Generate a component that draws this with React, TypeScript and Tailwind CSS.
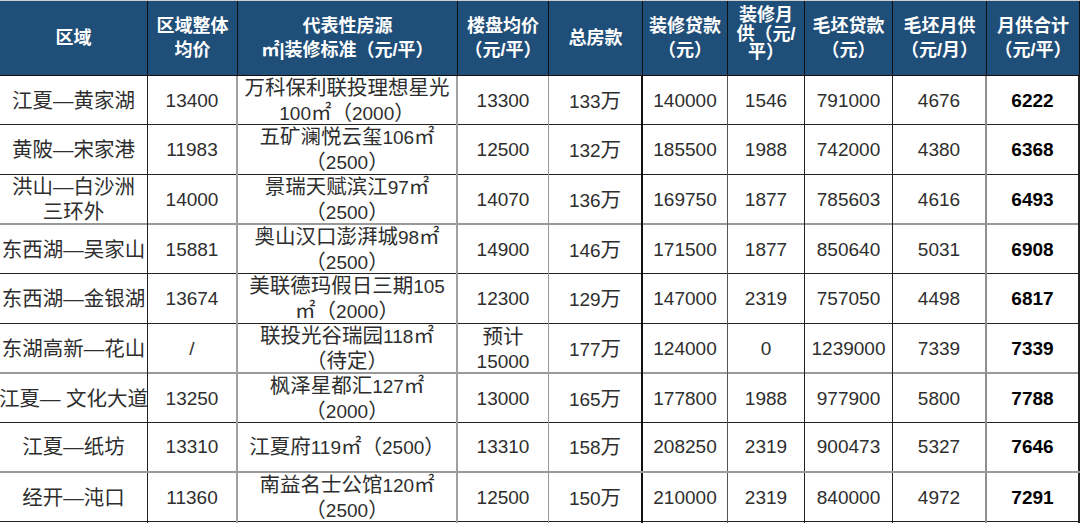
import React from "react";

// column widths in px, taken from the sheet grid
const cols = "grid grid-cols-[148px_90px_220px_91px_94px_85px_77px_88px_94px_93px]";

// right edge line of each body column (the sheet mixes black and grey rules)
const colBorder = [
  "border-r border-[#222]",
  "border-r-2 border-[#a0a0a0]",
  "border-r-2 border-[#a0a0a0]",
  "border-r border-[#9a9a9a]",
  "border-r-2 border-[#111]",
  "border-r border-[#555]",
  "border-r border-[#222]",
  "border-r border-[#222]",
  "border-r-2 border-[#8f8f8f]",
  "border-r-2 border-[#222]",
];

const headers: string[][] = [
  ["区域"],
  ["区域整体", "均价"],
  ["代表性房源", "㎡|装修标准（元/平）"],
  ["楼盘均价", "（元/平）"],
  ["总房款"],
  ["装修贷款", "（元）"],
  ["装修月", "供（元/", "平）"],
  ["毛坯贷款", "（元）"],
  ["毛坯月供", "（元/月）"],
  ["月供合计", "（元/平）"],
];

type Row = { h: string; line: string; cells: string[][] };

const rows: Row[] = [
  {
    h: "h-[49px]",
    line: "border-b border-[#222]",
    cells: [["江夏—黄家湖"], ["13400"], ["万科保利联投理想星光", "100㎡（2000）"], ["13300"], ["133万"], ["140000"], ["1546"], ["791000"], ["4676"], ["6222"]],
  },
  {
    h: "h-[50px]",
    line: "border-b border-[#222]",
    cells: [["黄陂—宋家港"], ["11983"], ["五矿澜悦云玺106㎡", "（2500）"], ["12500"], ["132万"], ["185500"], ["1988"], ["742000"], ["4380"], ["6368"]],
  },
  {
    h: "h-[50px]",
    line: "border-b-2 border-[#9a9a9a]",
    cells: [["洪山—白沙洲", "三环外"], ["14000"], ["景瑞天赋滨江97㎡", "（2500）"], ["14070"], ["136万"], ["169750"], ["1877"], ["785603"], ["4616"], ["6493"]],
  },
  {
    h: "h-[49px]",
    line: "border-b border-[#222]",
    cells: [["东西湖—吴家山"], ["15881"], ["奥山汉口澎湃城98㎡", "（2500）"], ["14900"], ["146万"], ["171500"], ["1877"], ["850640"], ["5031"], ["6908"]],
  },
  {
    h: "h-[50px]",
    line: "border-b border-[#222]",
    cells: [["东西湖—金银湖"], ["13674"], ["美联德玛假日三期105", "㎡（2000）"], ["12300"], ["129万"], ["147000"], ["2319"], ["757050"], ["4498"], ["6817"]],
  },
  {
    h: "h-[50px]",
    line: "border-b-2 border-[#9a9a9a]",
    cells: [["东湖高新—花山"], ["/"], ["联投光谷瑞园118㎡", "（待定）"], ["预计", "15000"], ["177万"], ["124000"], ["0"], ["1239000"], ["7339"], ["7339"]],
  },
  {
    h: "h-[49px]",
    line: "border-b border-[#222]",
    cells: [["江夏— 文化大道"], ["13250"], ["枫泽星都汇127㎡", "（2000）"], ["13000"], ["165万"], ["177800"], ["1988"], ["977900"], ["5800"], ["7788"]],
  },
  {
    h: "h-[50px]",
    line: "border-b-2 border-[#9a9a9a]",
    cells: [["江夏—纸坊"], ["13310"], ["江夏府119㎡（2500）"], ["13310"], ["158万"], ["208250"], ["2319"], ["900473"], ["5327"], ["7646"]],
  },
  {
    h: "h-[49px]",
    line: "border-b border-[#222]",
    cells: [["经开—沌口"], ["11360"], ["南益名士公馆120㎡", "（2500）"], ["12500"], ["150万"], ["210000"], ["2319"], ["840000"], ["4972"], ["7291"]],
  },
];

// the sheet's Chinese glyphs run a bit wider than the digits, so CJK runs get a larger size
function Mixed({ text }: { text: string }) {
  const parts = text.match(/[\u2014\u3000-\u9fff\uff00-\uffef]+|[^\u2014\u3000-\u9fff\uff00-\uffef]+/g) || [];
  return (
    <span>
      {parts.map((p, i) =>
        /[\u2014\u3000-\u9fff\uff00-\uffef]/.test(p) ? (
          <span key={i} className="text-[20.5px]">
            {p}
          </span>
        ) : (
          <span key={i}>{p}</span>
        )
      )}
    </span>
  );
}

export default function App() {
  return (
    <div className="w-[1080px] h-[523px] overflow-hidden bg-white font-['Liberation_Sans','Noto_Sans_CJK_SC',sans-serif] border-t border-[#d0d0d0]">
      {/* header */}
      <div className={`${cols} h-[75px] bg-[#1f4e79] border-b border-[#111] text-white font-bold text-[18px]`}>
        {headers.map((lines, i) => (
          <div
            key={i}
            className={`flex flex-col items-center justify-center text-center whitespace-nowrap border-r border-[#111] ${
              lines.length === 3 ? "leading-[18.5px] pb-2" : "leading-[24px]"
            }`}
          >
            {lines.map((t, j) => (
              <span key={j}>{t}</span>
            ))}
          </div>
        ))}
      </div>

      {/* body */}
      {rows.map((row, r) => (
        <div key={r} className={`${cols} ${row.h} ${row.line} text-[19px] leading-[24px] text-[#2e2e2e]`}>
          {row.cells.map((lines, c) => (
            <div
              key={c}
              className={`flex flex-col items-center justify-center text-center whitespace-nowrap ${colBorder[c]} ${
                c === 9 ? "font-bold text-black" : ""
              }`}
            >
              {lines.map((t, j) => (
                <Mixed key={j} text={t} />
              ))}
            </div>
          ))}
        </div>
      ))}
    </div>
  );
}
